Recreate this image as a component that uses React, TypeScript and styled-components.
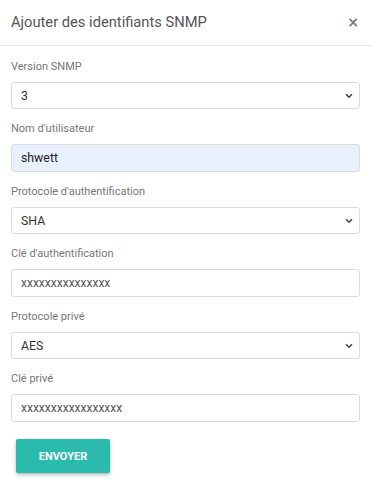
import React from "react";
import styled, { createGlobalStyle } from "styled-components";

const Global = createGlobalStyle`
  html, body { margin: 0; padding: 0; background: #fff; }
  body { font-family: Roboto, "Liberation Sans", sans-serif; }
  * { box-sizing: border-box; }
`;

const Modal = styled.div`
  width: 372px;
  background: #fff;
`;

const Header = styled.div`
  height: 46px;
  display: flex;
  align-items: center;
  justify-content: space-between;
  padding: 0 13px 2px 11px;
  border-bottom: 1px solid #e6e6e6;
`;

const Title = styled.h4`
  margin: 0;
  font-size: 14.7px;
  font-weight: 400;
  color: #555;
`;

const Close = styled.button`
  border: 0;
  background: none;
  padding: 0;
  font-size: 14px;
  font-weight: 700;
  color: #7a7a7a;
  line-height: 1;
  cursor: pointer;
  font-family: "DejaVu Sans", sans-serif;
`;

const Form = styled.form`
  padding: 14px 12px 20px 11px;
  display: flex;
  flex-direction: column;
`;

const Group = styled.div`
  display: flex;
  flex-direction: column;
  gap: 8px;
  margin-bottom: 13px;
`;

const Label = styled.label`
  font-size: 11px;
  line-height: 14px;
  color: #777;
`;

const SelectWrap = styled.div`
  position: relative;
`;

const Select = styled.select`
  width: 100%;
  height: 27px;
  appearance: none;
  border: 1px solid #dcdcdc;
  border-radius: 3px;
  background: #fff;
  padding: 0 24px 0 9px;
  font-family: Roboto, "Liberation Sans", sans-serif;
  font-size: 12.3px;
  color: #333;
  outline: none;
`;

const Chevron = styled.svg`
  position: absolute;
  right: 7px;
  top: 50%;
  margin-top: -3px;
  width: 8px;
  height: 6px;
  pointer-events: none;
`;

const Input = styled.input<{ $filled?: boolean }>`
  width: 100%;
  height: 28px;
  border: 1px solid #dcdcdc;
  border-radius: 3px;
  background: ${(p) => (p.$filled ? "#e8f0fe" : "#fff")};
  padding: 0 9px;
  font-family: Roboto, "Liberation Sans", sans-serif;
  font-size: ${(p) => (p.$filled ? "12.3px" : "12px")};
  color: ${(p) => (p.$filled ? "#222" : "#555")};
  outline: none;
`;

const Submit = styled.button`
  margin-top: 4px;
  margin-left: 5px;
  align-self: flex-start;
  width: 94px;
  height: 34px;
  border: 0;
  border-radius: 2px;
  background: #2bbbad;
  color: #fff;
  font-family: Roboto, "Liberation Sans", sans-serif;
  font-weight: 700;
  font-size: 11px;
  box-shadow: 0 2px 4px rgba(0, 0, 0, 0.22), 0 1px 2px rgba(0, 0, 0, 0.12);
  cursor: pointer;
`;

const SelectField = ({ label, value, options }: { label: string; value: string; options: string[] }) => (
  <Group>
    <Label>{label}</Label>
    <SelectWrap>
      <Select defaultValue={value}>
        {options.map((o) => (
          <option key={o}>{o}</option>
        ))}
      </Select>
      <Chevron viewBox="0 0 8 6">
        <path d="M1 1.2 L4 4.2 L7 1.2" fill="none" stroke="#444" strokeWidth="1.6" />
      </Chevron>
    </SelectWrap>
  </Group>
);

const TextField = ({ label, value, filled }: { label: string; value: string; filled?: boolean }) => (
  <Group>
    <Label>{label}</Label>
    <Input defaultValue={value} $filled={filled} />
  </Group>
);

export default function App() {
  return (
    <>
      <Global />
      <Modal>
        <Header>
          <Title>Ajouter des identifiants SNMP</Title>
          <Close type="button">×</Close>
        </Header>
        <Form onSubmit={(e) => e.preventDefault()}>
          <SelectField label="Version SNMP" value="3" options={["1", "2c", "3"]} />
          <TextField label="Nom d'utilisateur" value="shwett" filled />
          <SelectField label="Protocole d'authentification" value="SHA" options={["MD5", "SHA"]} />
          <TextField label="Clé d'authentification" value="xxxxxxxxxxxxxxx" />
          <SelectField label="Protocole privé" value="AES" options={["DES", "AES"]} />
          <TextField label="Clé privé" value="xxxxxxxxxxxxxxxxx" />
          <Submit type="submit">ENVOYER</Submit>
        </Form>
      </Modal>
    </>
  );
}
